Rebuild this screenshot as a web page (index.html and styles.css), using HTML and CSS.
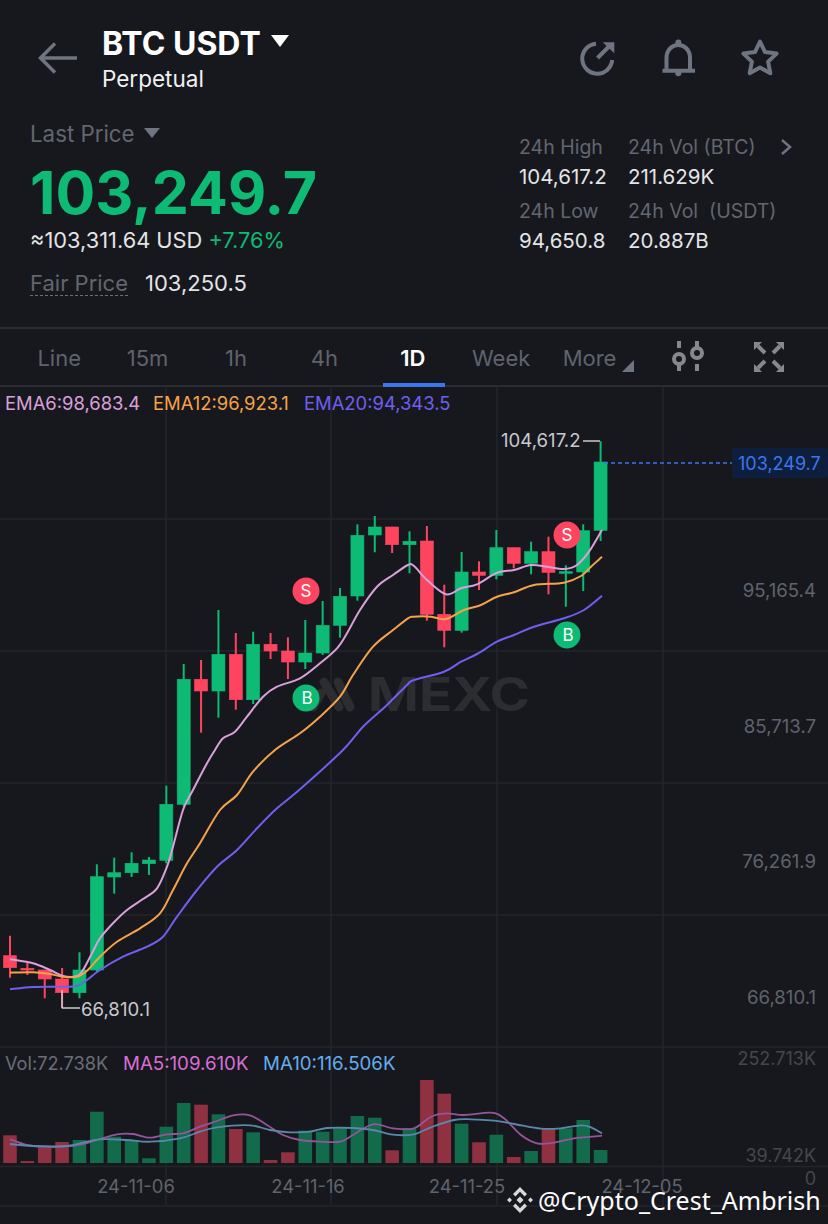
FILE: index.html
```html
<!DOCTYPE html>
<html lang="en">
<head>
    <meta charset="UTF-8">
    <meta name="viewport" content="width=device-width, initial-scale=1.0">
    <title>BTC USDT Perpetual</title>
    <link rel="stylesheet" href="styles.css">
</head>
<body>
    <div class="page">
        <header class="top-bar">
            <svg class="back-icon" width="40" height="34" viewBox="0 0 40 34">
                <path d="M39 17H3M17 2.5L2.5 17L17 31.5"/>
            </svg>
            <div class="pair">
                <div class="pair-name">BTC USDT <span class="caret-white"></span></div>
                <div class="pair-type">Perpetual</div>
            </div>
            <div class="top-icons">
                <svg class="top-icon" width="40" height="40" viewBox="0 0 40 40">
                    <path d="M18 5.7A15 15 0 1 0 34.2 22"/>
                    <path d="M19.5 20L31 8.500"/>
                    <path class="solid" d="M24.700 4.300H36.300V15.300Z"/>
                </svg>
                <svg class="top-icon" width="40" height="40" viewBox="0 0 40 40">
                    <path d="M7.500 32.500V20C7.500 12 13 7 19.300 7C25.600 7 31 12 31 20V32.500"/>
                    <path d="M3.500 32.700H36"/>
                    <circle class="solid" cx="19.300" cy="4.500" r="3"/>
                    <circle class="solid" cx="19.300" cy="35.300" r="3"/>
                </svg>
                <svg class="top-icon" width="40" height="40" viewBox="0 0 40 40">
                    <path d="M20 3.500L25 14.100L36.600 15.600L28.100 23.600L30.300 35.200L20 29.500L9.700 35.200L11.900 23.600L3.400 15.600L15 14.100Z"/>
                </svg>
            </div>
        </header>

        <section class="stats">
            <div class="price-col">
                <div class="muted last-price">Last Price <span class="caret-gray"></span></div>
                <div class="big-price">103,249.7</div>
                <div class="usd">≈103,311.64 USD <span class="up">+7.76%</span></div>
                <div class="fair">
                    <span class="muted fair-label">Fair Price</span>
                    <span class="fair-value">103,250.5</span>
                </div>
            </div>
            <div class="day-grid">
                <div class="muted">24h High</div>
                <div class="muted">24h Vol (BTC)</div>
                <div class="day-value">104,617.2</div>
                <div class="day-value">211.629K</div>
                <div class="muted">24h Low</div>
                <div class="muted">24h Vol&nbsp; (USDT)</div>
                <div class="day-value">94,650.8</div>
                <div class="day-value">20.887B</div>
            </div>
            <svg class="chevron" width="12" height="18" viewBox="0 0 12 18">
                <path d="M2 2L10 9L2 16"/>
            </svg>
        </section>

        <nav class="tabs">
            <div class="tab">Line</div>
            <div class="tab">15m</div>
            <div class="tab">1h</div>
            <div class="tab">4h</div>
            <div class="tab active">1D</div>
            <div class="tab">Week</div>
            <div class="tab">More<span class="corner"></span></div>
            <svg class="tool-icon sliders" width="36" height="34" viewBox="0 0 36 34">
                <path d="M8 1V8M8 24V31M26 1V8M26 24V31"/>
                <circle cx="8" cy="19" r="5"/>
                <circle cx="26" cy="13" r="5"/>
            </svg>
            <svg class="tool-icon expand" width="34" height="34" viewBox="0 0 34 34">
                <path d="M6 6L13 13M28 6L21 13M6 28L13 21M28 28L21 21"/>
                <path class="solid" d="M2 2H10L2 10ZM32 2H24L32 10ZM2 32H10L2 24ZM32 32H24L32 24Z"/>
            </svg>
        </nav>

        <main class="chart-wrap">
            <svg id="chart" class="chart" width="828" height="837" viewBox="0 387 828 837">
                <g id="grid" class="grid"></g>

                <g class="logo-mark">
                    <path class="logo-stroke" d="M324 682L339 707M338 682L350 707M313 707L321 693"/>
                    <text class="logo-text" x="368" y="711" textLength="162" lengthAdjust="spacingAndGlyphs">MEXC</text>
                </g>

                <g id="candles"></g>
                <g id="ema-lines"></g>
                <g id="vol-bars"></g>
                <g id="vol-lines"></g>

                <text class="legend ema6" x="5" y="410">EMA6:98,683.4</text>
                <text class="legend ema12" x="153" y="410">EMA12:96,923.1</text>
                <text class="legend ema20" x="304" y="410">EMA20:94,343.5</text>

                <text class="axis" x="816" y="597">95,165.4</text>
                <text class="axis" x="816" y="733">85,713.7</text>
                <text class="axis" x="816" y="868">76,261.9</text>
                <text class="axis" x="816" y="1004">66,810.1</text>

                <path class="peak-line" d="M583 441H600M62 1008H80M62 990V1008"/>
                <text class="peak" x="501" y="447">104,617.2</text>
                <text class="peak" x="81" y="1016">66,810.1</text>

                <path class="last-line" d="M604 463H732"/>
                <rect class="last-box" x="732" y="448" width="96" height="30" rx="2"/>
                <text class="last-tag" x="738" y="470">103,249.7</text>

                <g class="signal sell">
                    <circle cx="306" cy="591" r="13.500"/>
                    <text x="306" y="597">S</text>
                </g>
                <g class="signal buy">
                    <circle cx="306" cy="698" r="13.500"/>
                    <text x="307" y="704">B</text>
                </g>
                <g class="signal sell">
                    <circle cx="567" cy="535" r="13.500"/>
                    <text x="567" y="541">S</text>
                </g>
                <g class="signal buy">
                    <circle cx="567" cy="635" r="13.500"/>
                    <text x="568" y="641">B</text>
                </g>

                <text class="vol-legend vol-text" x="5" y="1070">Vol:72.738K</text>
                <text class="vol-legend ma5" x="123" y="1070">MA5:109.610K</text>
                <text class="vol-legend ma10" x="263" y="1070">MA10:116.506K</text>

                <text class="axis faint" x="816" y="1065">252.713K</text>
                <text class="axis faint" x="816" y="1162">39.742K</text>
                <text class="axis faint" x="816" y="1185">0</text>

                <text class="date" x="136" y="1193">24-11-06</text>
                <text class="date" x="308" y="1193">24-11-16</text>
                <text class="date" x="467" y="1193">24-11-25</text>
                <text class="date" x="642" y="1193">24-12-05</text>
            </svg>

            <div class="credit">
                <svg class="credit-logo" width="28" height="28" viewBox="0 0 28 28">
                    <path d="M14 10.500L17.500 14L14 17.500L10.500 14Z"/>
                    <path d="M14 1L21 8L18.600 10.400L14 5.800L9.400 10.400L7 8Z"/>
                    <path d="M14 27L21 20L18.600 17.600L14 22.200L9.400 17.600L7 20Z"/>
                    <path d="M1 14L3.500 11.500L6 14L3.500 16.500Z"/>
                    <path d="M27 14L24.500 11.500L22 14L24.500 16.500Z"/>
                </svg>
                <span>@Crypto_Crest_Ambrish</span>
            </div>
        </main>
    </div>

    <script src="chart.js"></script>
</body>
</html>
```

FILE: styles.css
```css
body {
    font-family: Inter, "Liberation Sans", sans-serif;
    background-color: #17181d;
    color: #e3e4e6;
    margin: 0;
    padding: 0;
}
.page {
    width: 828px;
    height: 1224px;
    overflow: hidden;
}

/* top bar */
.top-bar {
    display: flex;
    height: 100px;
    padding-left: 38px;
    box-sizing: border-box;
}
.back-icon {
    margin-top: 41px;
    margin-right: 24px;
}
.back-icon path {
    fill: none;
    stroke: #6e7480;
    stroke-width: 3.5;
}
.pair {
    padding-top: 26px;
}
.pair-name {
    font-size: 32px;
    line-height: 36px;
    font-weight: 700;
    color: #fff;
}
.caret-white {
    display: inline-block;
    margin-left: 3px;
    vertical-align: 8px;
    border-left: 9px solid transparent;
    border-right: 9px solid transparent;
    border-top: 12px solid #fff;
}
.pair-type {
    font-size: 22.5px;
    line-height: 34px;
    color: #f1f1f3;
}
.top-icons {
    display: flex;
    gap: 41px;
    margin-left: auto;
    margin-right: 48px;
    padding-top: 38px;
}
.top-icon path,
.top-icon circle {
    fill: none;
    stroke: #6e7480;
    stroke-width: 4;
    stroke-linejoin: round;
}
.top-icon .solid {
    fill: #6e7480;
    stroke: none;
}

/* price block */
.stats {
    display: flex;
    height: 229px;
    box-sizing: border-box;
    border-bottom: 2px solid #2a2c31;
    padding-left: 30px;
    position: relative;
}
.muted {
    color: #62666f;
}
.up {
    color: #0dbb74;
}
.price-col {
    width: 489px;
    padding-top: 21px;
}
.last-price {
    font-size: 22.3px;
    line-height: 26px;
}
.caret-gray {
    display: inline-block;
    margin-left: 3px;
    vertical-align: 4px;
    border-left: 8px solid transparent;
    border-right: 8px solid transparent;
    border-top: 10px solid #6e7480;
}
.big-price {
    font-size: 59px;
    line-height: 64px;
    font-weight: 700;
    color: #0dbb74;
    margin-top: 14px;
}
.usd {
    font-size: 21.8px;
    line-height: 26px;
    margin-top: 2px;
}
.fair {
    display: flex;
    gap: 17px;
    margin-top: 18px;
    font-size: 22px;
    line-height: 24px;
}
.fair-label {
    border-bottom: 1px dashed #6a6e78;
}
.day-grid {
    display: grid;
    grid-template-columns: 109px auto;
    grid-template-rows: 29px 35px 29px 29px;
    align-content: start;
    padding-top: 33px;
    font-size: 19.5px;
    line-height: 29px;
}
.day-value {
    font-size: 20.5px;
}
.chevron {
    position: absolute;
    left: 780px;
    top: 38px;
}
.chevron path {
    fill: none;
    stroke: #6e7480;
    stroke-width: 2.5;
}

/* interval tabs */
.tabs {
    display: flex;
    align-items: center;
    height: 58px;
    box-sizing: border-box;
    padding-left: 15px;
    border-bottom: 2px solid #2a2c31;
}
.tab {
    width: 88.4px;
    height: 56px;
    line-height: 58px;
    text-align: center;
    font-size: 22px;
    color: #5f636d;
    box-sizing: border-box;
    position: relative;
}
.tab.active {
    color: #fff;
    font-weight: 600;
}
.tab.active::after {
    content: "";
    position: absolute;
    left: 14px;
    right: 12px;
    bottom: -2px;
    height: 4px;
    background-color: #3b76ef;
}
.corner {
    position: absolute;
    right: 0;
    bottom: 13px;
    border-left: 12px solid transparent;
    border-bottom: 12px solid #6e7480;
}
.tool-icon path,
.tool-icon circle {
    fill: none;
    stroke: #85888f;
    stroke-width: 4;
}
.tool-icon .solid {
    fill: #85888f;
    stroke: none;
}
.sliders {
    margin-left: 37px;
}
.expand {
    margin-left: 45px;
}

/* chart */
.chart-wrap {
    position: relative;
}
.chart {
    display: block;
}
.grid line {
    stroke: #222429;
    stroke-width: 1.5;
}
.logo-mark {
    fill: #2c2d31;
}
.logo-stroke {
    fill: none;
    stroke: #2c2d31;
    stroke-width: 9;
    stroke-linecap: round;
}
.logo-text {
    font-size: 46px;
    font-weight: 700;
}
.candle-up {
    fill: #0dbb74;
    stroke: #0dbb74;
}
.candle-down {
    fill: #fd4560;
    stroke: #fd4560;
}
.wick {
    stroke-width: 2;
}
.ema {
    fill: none;
    stroke-width: 2;
}
.ema-6 {
    stroke: #d9a0dc;
}
.ema-12 {
    stroke: #f5a24a;
}
.ema-20 {
    stroke: #6f5ff0;
}
.legend {
    font-size: 18.4px;
}
.vol-legend {
    font-size: 18.7px;
}
.ema6 {
    fill: #d9a0dc;
}
.ema12 {
    fill: #f5a24a;
}
.ema20 {
    fill: #6f5ff0;
}
.vol-text {
    fill: #6a6e78;
    font-size: 18.2px;
}
.ma5 {
    fill: #d96fd5;
}
.ma10 {
    fill: #64aef0;
}
.axis {
    font-size: 18.6px;
    fill: #5f636b;
    text-anchor: end;
}
.axis.faint {
    font-size: 18px;
    fill: #45474d;
}
.date {
    font-size: 18.4px;
    fill: #5f636b;
    text-anchor: middle;
}
.peak {
    font-size: 18.6px;
    fill: #c8c9cc;
}
.peak-line {
    fill: none;
    stroke: #c8c9cc;
    stroke-width: 1.5;
}
.last-line {
    fill: none;
    stroke: #3b76ef;
    stroke-width: 1.5;
    stroke-dasharray: 4 3;
}
.last-box {
    fill: #0e1f3d;
}
.last-tag {
    font-size: 18px;
    fill: #3b76ef;
}
.signal text {
    font-size: 17px;
    fill: #fff;
    text-anchor: middle;
}
.sell circle {
    fill: #fd4560;
}
.buy circle {
    fill: #0dbb74;
}
.vol-up {
    fill: #126b4a;
}
.vol-down {
    fill: #8f3140;
}
.ma-line {
    fill: none;
    stroke-width: 1.8;
}
.ma-5 {
    stroke: #96549a;
}
.ma-10 {
    stroke: #5a88ad;
}

/* repost credit */
.credit {
    position: absolute;
    left: 506px;
    top: 799px;
    display: flex;
    align-items: center;
    gap: 4px;
    color: #fff;
    font-family: "Noto Sans", sans-serif;
    font-size: 25px;
    line-height: 28px;
}
.credit-logo path {
    fill: #d8d8d8;
}
```

FILE: chart.js
```js
const SVG_NS = 'http://www.w3.org/2000/svg';

// colour, high, body top, body bottom, low
const candles = [
    ['d', 935.7, 955.7, 967.7, 977.7],
    ['d', 963, 968.3, 970, 975],
    ['d', 970, 970, 979, 998.3],
    ['d', 968, 979, 992.7, 1008.3],
    ['u', 952.3, 970, 992.7, 998.3],
    ['u', 864.3, 876.7, 970, 971.7],
    ['u', 857.7, 872.7, 877, 893.7],
    ['u', 852.3, 863.3, 872.7, 877],
    ['u', 857, 860, 863.7, 875],
    ['u', 785.7, 804.3, 860.3, 863.3],
    ['u', 664, 679.3, 804.3, 806.7],
    ['d', 660, 679.3, 691, 732.7],
    ['u', 610, 654.3, 691, 717.7],
    ['d', 633, 654.3, 699.7, 709.7],
    ['u', 631.7, 644.3, 699.7, 704],
    ['d', 633, 644.3, 651, 659],
    ['d', 637.3, 651, 662, 679],
    ['u', 620, 653, 662, 669],
    ['u', 601, 625.3, 653, 655],
    ['u', 588, 596.3, 625.3, 637.7],
    ['u', 524.3, 535.3, 596, 600.7],
    ['u', 516, 527, 535, 552.3],
    ['d', 526.7, 527, 544.7, 553],
    ['u', 531.3, 541.3, 544.7, 573.3],
    ['d', 526, 541, 614.3, 620.7],
    ['d', 584.7, 614.3, 630.3, 647.3],
    ['u', 552, 572, 630.3, 632.7],
    ['d', 561.3, 572, 575.3, 590],
    ['u', 530, 547.7, 575.3, 579.3],
    ['d', 547.7, 547.7, 563.3, 568.3],
    ['u', 541.7, 551.7, 563.3, 574.3],
    ['d', 536.7, 551.7, 572.3, 594.3],
    ['u', 565.3, 571.7, 573.3, 606.7],
    ['u', 524.3, 530.7, 572, 591],
    ['u', 441.3, 462, 530.3, 541]
];

// volume bar tops, same order as candles
const volTops = [
    1135.3, 1161, 1147.3, 1142, 1140, 1111.7, 1136.7, 1140, 1158.3, 1126.7, 1103, 1104.7,
    1114.3, 1129, 1132.3, 1160, 1152.3, 1130.7, 1131.7, 1127.3, 1116, 1117.7, 1150.3, 1128.3,
    1080, 1093.7, 1123.7, 1142.3, 1134.7, 1157, 1151, 1129, 1128.3, 1120, 1150
];

const ema6 = [
    [10, 959.3], [33, 963.3], [50, 970], [63, 976], [77, 976], [83, 970], [92, 953.3], [100, 938.3],
    [113, 923.3], [127, 910], [143, 899], [157, 888.3], [167, 866.7], [173, 846.7], [183, 810], [193, 790],
    [207, 763.3], [215, 750], [223, 738.3], [235, 731.7], [247, 716.7], [263, 696.7], [277, 686.7], [300, 678.3],
    [320, 663.3], [337, 648.3], [347, 633.3], [360, 610], [377, 586.7], [393, 575], [408, 565], [414, 566],
    [427, 580], [446, 594.3], [461, 588.3], [477, 584.3], [497, 572.7], [514, 570], [531, 565], [547, 566.7],
    [564, 569], [577, 565], [589, 551.7], [602, 530]
];
const ema12 = [
    [10, 972.7], [33, 972.3], [50, 974], [63, 976.7], [77, 976.7], [87, 970.7], [100, 956.7], [117, 941.7],
    [140, 928.3], [160, 913.3], [173, 890], [187, 863.3], [200, 843.3], [220, 810], [237, 795], [253, 771.7],
    [275, 750], [300, 733.3], [320, 716.7], [340, 696.7], [353, 675], [373, 646.7], [393, 630], [408, 618.3],
    [414, 616.7], [431, 616.7], [446, 619], [464, 610], [481, 605], [497, 596.7], [514, 592.3], [534, 585],
    [564, 582.7], [581, 576], [591, 566.7], [602, 556.7]
];
const ema20 = [
    [10, 989.3], [33, 987], [60, 986.7], [77, 986], [87, 980], [100, 970], [123, 956.7], [147, 946.7],
    [163, 936.7], [177, 916.7], [197, 890], [217, 866.7], [237, 850], [257, 828.3], [277, 808.3], [300, 789.3],
    [343, 750], [363, 726.7], [387, 705], [407, 685], [414, 680], [444, 671.7], [461, 661.7], [477, 654],
    [497, 641.7], [514, 635], [534, 626.7], [564, 618.3], [584, 610], [602, 595.7]
];
const ma5 = [
    [10, 1139.3], [27, 1145], [43, 1146.7], [63, 1146.7], [83, 1144], [100, 1139], [117, 1134.3], [133, 1134],
    [150, 1137.7], [167, 1134.3], [183, 1133.3], [200, 1126.7], [217, 1121], [233, 1115.3], [250, 1115.3], [267, 1125],
    [283, 1135], [300, 1140], [320, 1141.7], [340, 1141.7], [353, 1135], [373, 1124.3], [393, 1128.3], [414, 1128.3],
    [431, 1116.7], [446, 1113.3], [464, 1115], [491, 1112.7], [504, 1118.3], [521, 1135], [537, 1143.3], [554, 1142.7],
    [574, 1138.3], [602, 1135.7]
];
const ma10 = [
    [10, 1144], [33, 1146], [67, 1146], [83, 1142.7], [100, 1139.3], [127, 1140], [150, 1141.7], [180, 1138.3],
    [200, 1131.7], [217, 1127.3], [250, 1125.3], [270, 1130], [290, 1132.3], [310, 1131.7], [327, 1128], [353, 1128],
    [373, 1130], [393, 1134.7], [414, 1134.3], [431, 1127.3], [454, 1120], [471, 1119.3], [494, 1120.7], [514, 1124],
    [541, 1128.7], [561, 1128.3], [581, 1125.3], [591, 1127.3], [602, 1133.3]
];

function add(parent, tag, attrs) {
    const el = document.createElementNS(SVG_NS, tag);
    for (const key in attrs) {
        el.setAttribute(key, attrs[key]);
    }
    document.getElementById(parent).appendChild(el);
    return el;
}

// Catmull-Rom through the points, as cubic beziers
function smoothPath(pts) {
    let d = `M${pts[0][0]} ${pts[0][1]}`;
    for (let i = 0; i < pts.length - 1; i++) {
        const p0 = pts[Math.max(i - 1, 0)];
        const p1 = pts[i];
        const p2 = pts[i + 1];
        const p3 = pts[Math.min(i + 2, pts.length - 1)];
        const c1x = p1[0] + (p2[0] - p0[0]) / 6;
        const c1y = p1[1] + (p2[1] - p0[1]) / 6;
        const c2x = p2[0] - (p3[0] - p1[0]) / 6;
        const c2y = p2[1] - (p3[1] - p1[1]) / 6;
        d += `C${c1x.toFixed(1)} ${c1y.toFixed(1)} ${c2x.toFixed(1)} ${c2y.toFixed(1)} ${p2[0]} ${p2[1]}`;
    }
    return d;
}

[519, 651, 783, 915, 1047, 1166.5, 1206].forEach(y => {
    add('grid', 'line', { x1: 0, x2: 828, y1: y, y2: y });
});
[166, 331, 497, 663].forEach(x => {
    add('grid', 'line', { x1: x, x2: x, y1: 387, y2: 1206 });
});

candles.forEach((c, i) => {
    const x = 10 + 17.37 * i;
    const cls = c[0] === 'u' ? 'candle-up' : 'candle-down';
    add('candles', 'line', { x1: x, x2: x, y1: c[1], y2: c[4], class: cls + ' wick' });
    add('candles', 'rect', { x: x - 6.5, y: c[2], width: 13, height: c[3] - c[2], class: cls, 'stroke-width': 0.6 });
    add('vol-bars', 'rect', {
        x: x - 6.8, y: volTops[i], width: 13.6, height: 1163 - volTops[i],
        class: c[0] === 'u' ? 'vol-up' : 'vol-down'
    });
});

add('ema-lines', 'path', { d: smoothPath(ema6), class: 'ema ema-6' });
add('ema-lines', 'path', { d: smoothPath(ema12), class: 'ema ema-12' });
add('ema-lines', 'path', { d: smoothPath(ema20), class: 'ema ema-20' });
add('vol-lines', 'path', { d: smoothPath(ma5), class: 'ma-line ma-5' });
add('vol-lines', 'path', { d: smoothPath(ma10), class: 'ma-line ma-10' });
```
